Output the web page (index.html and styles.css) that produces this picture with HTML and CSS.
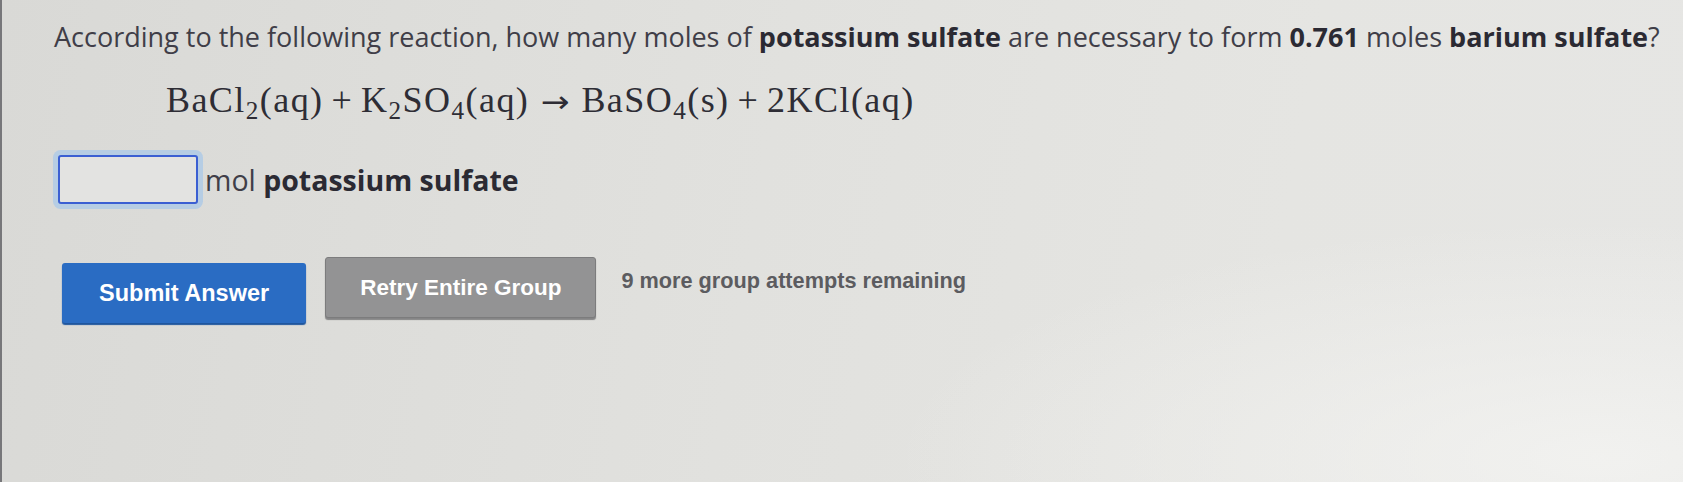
FILE: index.html
```html
<!DOCTYPE html>
<html lang="en">
<head>
<meta charset="utf-8">
<title>Question</title>
<link rel="stylesheet" href="styles.css">
</head>
<body>
<main class="page">
  <p class="question">According to the following reaction, how many moles of <b>potassium sulfate</b> are necessary to form <b>0.761</b> moles <b>barium sulfate</b>?</p>
  <p class="equation"><span>BaCl<sub>2</sub>(aq)</span><span class="op">+</span><span>K<sub>2</sub>SO<sub>4</sub>(aq)</span><span class="rel">→</span><span>BaSO<sub>4</sub>(s)</span><span class="op">+</span><span>2KCl(aq)</span></p>
  <div class="answer-row">
    <input class="answer" type="text" aria-label="answer">
    <span class="unit">mol <b>potassium sulfate</b></span>
  </div>
  <div class="actions">
    <button class="btn btn-submit" type="button">Submit Answer</button>
    <button class="btn btn-retry" type="button">Retry Entire Group</button>
    <span class="attempts">9 more group attempts remaining</span>
  </div>
</main>
</body>
</html>
```
FILE: styles.css
```css
html, body {
  margin: 0;
  height: 100%;
}
body {
  background:
    radial-gradient(ellipse 60% 70% at 95% 95%, rgba(244,244,242,0.8), rgba(244,244,242,0) 70%),
    linear-gradient(100deg, #d9d9d6 0%, #e1e1de 45%, #e5e5e2 75%, #e6e6e4 100%);
  border-left: 2px solid #77777a;
  box-sizing: border-box;
  overflow: hidden;
}
.page {
  padding: 18px 0 0 52px;
}
.question {
  margin: 0;
  font-family: "Open Sans", sans-serif;
  font-size: 27px;
  line-height: 38px;
  color: #403e48;
  white-space: nowrap;
}
.question b {
  font-weight: 700;
  color: #2b2a33;
}
.equation {
  margin: 22px 0 0 112px;
  font-family: "Liberation Serif", "DejaVu Serif", serif;
  font-size: 36px;
  line-height: 44px;
  letter-spacing: 0.04em;
  color: #2e2d35;
  white-space: nowrap;
  display: flex;
  align-items: baseline;
}
.equation sub {
  font-size: 0.7em;
  line-height: 0;
  vertical-align: -0.27em;
}
.equation .op {
  padding: 0 0.22em;
}
.equation .rel {
  padding: 0 0.45em;
  font-family: "DejaVu Sans", sans-serif;
  font-size: 30px;
  letter-spacing: 0;
  transform: scaleX(1.15);
}
.answer-row {
  margin: 31px 0 0 4px;
  display: flex;
  align-items: center;
  gap: 7px;
}
.answer {
  box-sizing: border-box;
  width: 140px;
  height: 49px;
  margin: 0;
  border: 2px solid #3b5fd2;
  border-radius: 3px;
  background: #e3e3e1;
  box-shadow: 0 0 0 5px #b6cde4;
  outline: none;
}
.unit {
  font-family: "Open Sans", sans-serif;
  font-size: 28.5px;
  line-height: 36px;
  color: #403e48;
}
.unit b {
  color: #2b2a33;
}
.actions {
  margin: 53px 0 0 8px;
  display: flex;
  align-items: flex-start;
}
.btn {
  font-family: "Liberation Sans", Arial, sans-serif;
  font-weight: 700;
  font-size: 23.5px;
  line-height: 26px;
  color: #ffffff;
  border-radius: 3px;
  cursor: pointer;
}
.btn-submit {
  margin-top: 6px;
  padding: 17px 37px;
  border: 0;
  background: #2a6cc3;
  box-shadow: 0 2px 1px #1f569e;
}
.btn-retry {
  margin-left: 19px;
  padding: 16.5px 34px;
  border: 1px solid #7c7c7d;
  background: #939394;
  box-shadow: 0 2px 1px #858586;
  font-size: 22.5px;
}
.attempts {
  margin: 12px 0 0 25px;
  font-family: "Liberation Sans", Arial, sans-serif;
  font-weight: 700;
  font-size: 21.7px;
  line-height: 24px;
  color: #5c5c60;
}
```
